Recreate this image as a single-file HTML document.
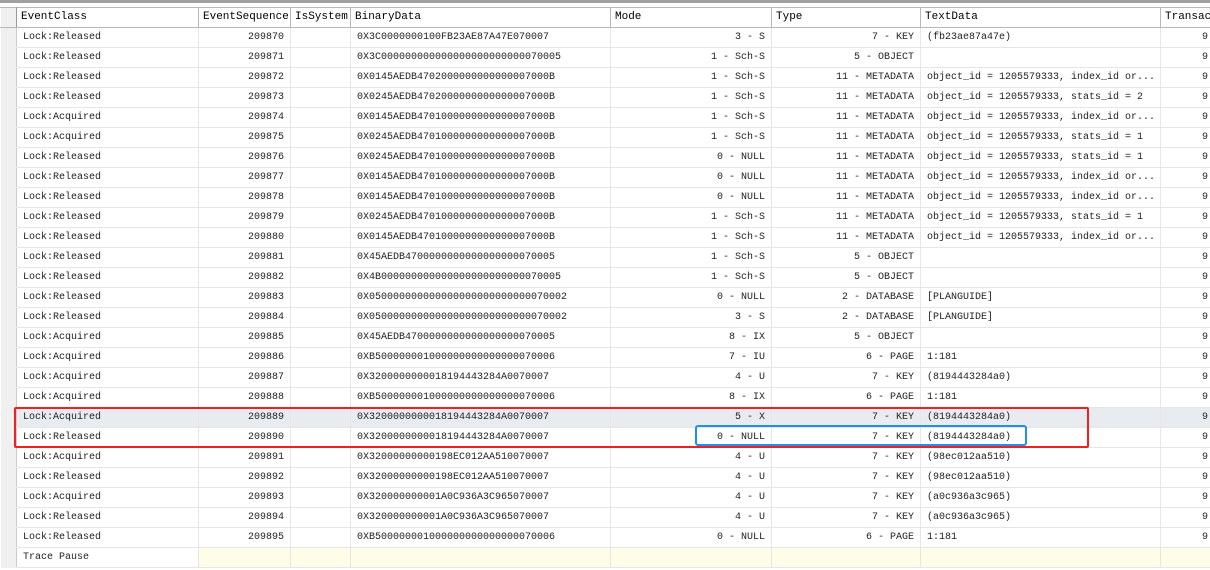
<!DOCTYPE html><html><head><style>
body{margin:0;width:1210px;height:570px;overflow:hidden;background:#fff;font-family:"Liberation Mono",monospace;font-size:10px;color:#222;position:relative}
.top{position:absolute;left:0;top:0;width:1210px;height:7px;background:#fff;border-top:3px solid #a0a0a0;box-sizing:border-box}
table{position:absolute;left:0;top:7px;border-collapse:collapse;table-layout:fixed;width:1210px}
td,th{height:20px;line-height:19px;padding:0 6px;border-right:1px solid #e6e6e6;border-bottom:1px solid #e6e6e6;white-space:nowrap;overflow:hidden;box-sizing:border-box}
th{font-weight:normal;text-align:left;background:#fff;border:1px solid #b8b8b8;border-left:1px solid #fff;height:20px;color:#000;font-size:11px;padding:0 4px}
th.g{background:#f0f0f0;border-right:1px solid #999}
td.g{background:#f0f0f0;border-right:1px solid #ccc;border-bottom:1px solid #f0f0f0;padding:0}
.r{text-align:right}
td:last-child{text-align:right;padding-right:2px}
tr.sel td{background:#e8ecf0}
tr.sel td.g{background:#f0f0f0}
tr.y td{background:#fffde8}
tr.y td.g{background:#f0f0f0}
.box{position:absolute;border-radius:2px}
</style></head><body>
<div class="top"></div>
<table>
<colgroup><col style="width:16px"><col style="width:182px"><col style="width:92px"><col style="width:60px"><col style="width:260px"><col style="width:161px"><col style="width:149px"><col style="width:240px"><col style="width:50px"></colgroup>
<tr><th class="g"></th><th>EventClass</th><th>EventSequence</th><th>IsSystem</th><th>BinaryData</th><th>Mode</th><th>Type</th><th>TextData</th><th style="text-align:left">Transaction</th></tr>
<tr><td class="g"></td><td>Lock:Released</td><td class="r">209870</td><td></td><td>0X3C0000000100FB23AE87A47E070007</td><td class="r">3 - S</td><td class="r">7 - KEY</td><td>(fb23ae87a47e)</td><td>9</td></tr>
<tr><td class="g"></td><td>Lock:Released</td><td class="r">209871</td><td></td><td>0X3C000000000000000000000000070005</td><td class="r">1 - Sch-S</td><td class="r">5 - OBJECT</td><td></td><td>9</td></tr>
<tr><td class="g"></td><td>Lock:Released</td><td class="r">209872</td><td></td><td>0X0145AEDB4702000000000000007000B</td><td class="r">1 - Sch-S</td><td class="r">11 - METADATA</td><td>object_id = 1205579333, index_id or...</td><td>9</td></tr>
<tr><td class="g"></td><td>Lock:Released</td><td class="r">209873</td><td></td><td>0X0245AEDB4702000000000000007000B</td><td class="r">1 - Sch-S</td><td class="r">11 - METADATA</td><td>object_id = 1205579333, stats_id = 2</td><td>9</td></tr>
<tr><td class="g"></td><td>Lock:Acquired</td><td class="r">209874</td><td></td><td>0X0145AEDB4701000000000000007000B</td><td class="r">1 - Sch-S</td><td class="r">11 - METADATA</td><td>object_id = 1205579333, index_id or...</td><td>9</td></tr>
<tr><td class="g"></td><td>Lock:Acquired</td><td class="r">209875</td><td></td><td>0X0245AEDB4701000000000000007000B</td><td class="r">1 - Sch-S</td><td class="r">11 - METADATA</td><td>object_id = 1205579333, stats_id = 1</td><td>9</td></tr>
<tr><td class="g"></td><td>Lock:Released</td><td class="r">209876</td><td></td><td>0X0245AEDB4701000000000000007000B</td><td class="r">0 - NULL</td><td class="r">11 - METADATA</td><td>object_id = 1205579333, stats_id = 1</td><td>9</td></tr>
<tr><td class="g"></td><td>Lock:Released</td><td class="r">209877</td><td></td><td>0X0145AEDB4701000000000000007000B</td><td class="r">0 - NULL</td><td class="r">11 - METADATA</td><td>object_id = 1205579333, index_id or...</td><td>9</td></tr>
<tr><td class="g"></td><td>Lock:Released</td><td class="r">209878</td><td></td><td>0X0145AEDB4701000000000000007000B</td><td class="r">0 - NULL</td><td class="r">11 - METADATA</td><td>object_id = 1205579333, index_id or...</td><td>9</td></tr>
<tr><td class="g"></td><td>Lock:Released</td><td class="r">209879</td><td></td><td>0X0245AEDB4701000000000000007000B</td><td class="r">1 - Sch-S</td><td class="r">11 - METADATA</td><td>object_id = 1205579333, stats_id = 1</td><td>9</td></tr>
<tr><td class="g"></td><td>Lock:Released</td><td class="r">209880</td><td></td><td>0X0145AEDB4701000000000000007000B</td><td class="r">1 - Sch-S</td><td class="r">11 - METADATA</td><td>object_id = 1205579333, index_id or...</td><td>9</td></tr>
<tr><td class="g"></td><td>Lock:Released</td><td class="r">209881</td><td></td><td>0X45AEDB4700000000000000000070005</td><td class="r">1 - Sch-S</td><td class="r">5 - OBJECT</td><td></td><td>9</td></tr>
<tr><td class="g"></td><td>Lock:Released</td><td class="r">209882</td><td></td><td>0X4B000000000000000000000000070005</td><td class="r">1 - Sch-S</td><td class="r">5 - OBJECT</td><td></td><td>9</td></tr>
<tr><td class="g"></td><td>Lock:Released</td><td class="r">209883</td><td></td><td>0X050000000000000000000000000070002</td><td class="r">0 - NULL</td><td class="r">2 - DATABASE</td><td>[PLANGUIDE]</td><td>9</td></tr>
<tr><td class="g"></td><td>Lock:Released</td><td class="r">209884</td><td></td><td>0X050000000000000000000000000070002</td><td class="r">3 - S</td><td class="r">2 - DATABASE</td><td>[PLANGUIDE]</td><td>9</td></tr>
<tr><td class="g"></td><td>Lock:Acquired</td><td class="r">209885</td><td></td><td>0X45AEDB4700000000000000000070005</td><td class="r">8 - IX</td><td class="r">5 - OBJECT</td><td></td><td>9</td></tr>
<tr><td class="g"></td><td>Lock:Acquired</td><td class="r">209886</td><td></td><td>0XB500000001000000000000000070006</td><td class="r">7 - IU</td><td class="r">6 - PAGE</td><td>1:181</td><td>9</td></tr>
<tr><td class="g"></td><td>Lock:Acquired</td><td class="r">209887</td><td></td><td>0X3200000000018194443284A0070007</td><td class="r">4 - U</td><td class="r">7 - KEY</td><td>(8194443284a0)</td><td>9</td></tr>
<tr><td class="g"></td><td>Lock:Acquired</td><td class="r">209888</td><td></td><td>0XB500000001000000000000000070006</td><td class="r">8 - IX</td><td class="r">6 - PAGE</td><td>1:181</td><td>9</td></tr>
<tr class="sel"><td class="g"></td><td>Lock:Acquired</td><td class="r">209889</td><td></td><td>0X3200000000018194443284A0070007</td><td class="r">5 - X</td><td class="r">7 - KEY</td><td>(8194443284a0)</td><td>9</td></tr>
<tr><td class="g"></td><td>Lock:Released</td><td class="r">209890</td><td></td><td>0X3200000000018194443284A0070007</td><td class="r">0 - NULL</td><td class="r">7 - KEY</td><td>(8194443284a0)</td><td>9</td></tr>
<tr><td class="g"></td><td>Lock:Acquired</td><td class="r">209891</td><td></td><td>0X32000000000198EC012AA510070007</td><td class="r">4 - U</td><td class="r">7 - KEY</td><td>(98ec012aa510)</td><td>9</td></tr>
<tr><td class="g"></td><td>Lock:Released</td><td class="r">209892</td><td></td><td>0X32000000000198EC012AA510070007</td><td class="r">4 - U</td><td class="r">7 - KEY</td><td>(98ec012aa510)</td><td>9</td></tr>
<tr><td class="g"></td><td>Lock:Acquired</td><td class="r">209893</td><td></td><td>0X320000000001A0C936A3C965070007</td><td class="r">4 - U</td><td class="r">7 - KEY</td><td>(a0c936a3c965)</td><td>9</td></tr>
<tr><td class="g"></td><td>Lock:Released</td><td class="r">209894</td><td></td><td>0X320000000001A0C936A3C965070007</td><td class="r">4 - U</td><td class="r">7 - KEY</td><td>(a0c936a3c965)</td><td>9</td></tr>
<tr><td class="g"></td><td>Lock:Released</td><td class="r">209895</td><td></td><td>0XB500000001000000000000000070006</td><td class="r">0 - NULL</td><td class="r">6 - PAGE</td><td>1:181</td><td>9</td></tr>
<tr class="y"><td class="g"></td><td style="background:#fff">Trace Pause</td><td></td><td></td><td></td><td></td><td></td><td></td><td></td></tr>
</table>
<div class="box" style="left:14px;top:407px;width:1075px;height:41px;border:2px solid #f02020;box-sizing:border-box"></div>
<div class="box" style="left:695px;top:425px;width:332px;height:21px;border:2px solid #2090f0;box-sizing:border-box;border-radius:3px"></div>
</body></html>
